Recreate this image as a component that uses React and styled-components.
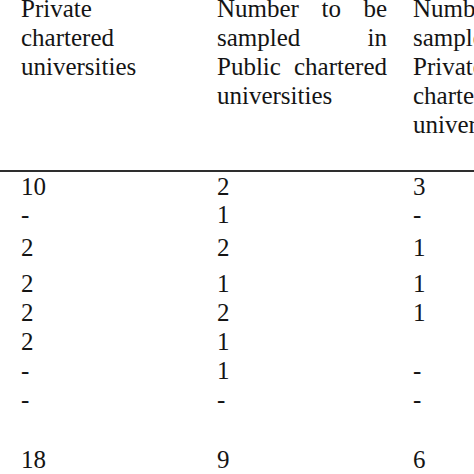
import React from "react";
import styled, { createGlobalStyle } from "styled-components";

const Global = createGlobalStyle`
  html, body { margin: 0; padding: 0; background: #fff; overflow: hidden; }
  body { width: 474px; height: 474px; }
`;

const Page = styled.div`
  width: 474px;
  height: 474px;
  overflow: hidden;
  font-family: "Liberation Serif", "Times New Roman", serif;
  font-size: 25px;
  line-height: 29px;
  color: #141414;
`;

const Table = styled.div`
  margin-top: -6px;
  width: 640px;
`;

const Row = styled.div`
  display: grid;
  grid-template-columns: 170px 170px 170px;
  column-gap: 26px;
  padding-left: 21px;
  height: ${(p) => p.$h}px;
  padding-bottom: ${(p) => p.$pb || 0}px;
  border-bottom: ${(p) => (p.$rule ? "2px solid #2e2e2e" : "none")};
`;

const HeadCell = styled.div`
  text-align: justify;
  hyphens: none;
`;

const Cell = styled.div`
  white-space: nowrap;
`;

const header = [
  "Private chartered universities",
  "Number to be sampled in Public chartered universities",
  "Number to be sampled in Private chartered universities",
];

const rows = [
  { h: 28, v: ["10", "2", "3"] },
  { h: 33, v: ["-", "1", "-"] },
  { h: 36, v: ["2", "2", "1"] },
  { h: 29, v: ["2", "1", "1"] },
  { h: 29, v: ["2", "2", "1"] },
  { h: 29, v: ["2", "1", ""] },
  { h: 29, v: ["-", "1", "-"] },
  { h: 60, v: ["-", "-", "-"] },
  { h: 29, v: ["18", "9", "6"] },
];

export default function App() {
  return (
    <Page>
      <Global />
      <Table>
        <Row $h={145} $pb={31} $rule>
          {header.map((t, i) => (
            <HeadCell key={i}>{t}</HeadCell>
          ))}
        </Row>
        {rows.map((r, i) => (
          <Row key={i} $h={r.h}>
            {r.v.map((v, j) => (
              <Cell key={j}>{v}</Cell>
            ))}
          </Row>
        ))}
      </Table>
    </Page>
  );
}
